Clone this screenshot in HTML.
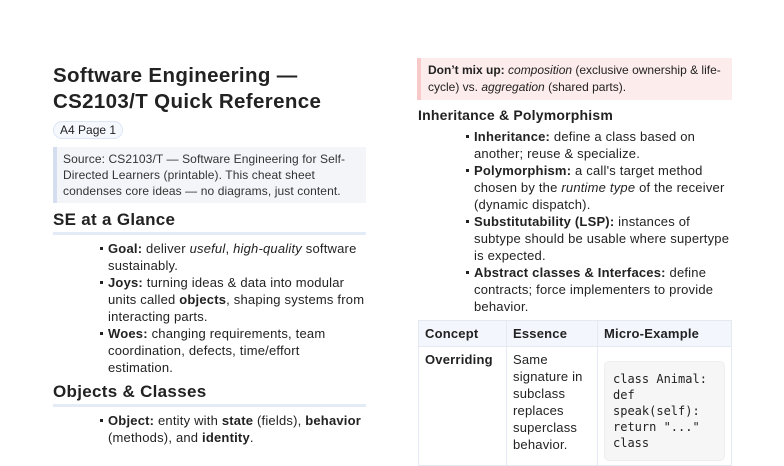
<!DOCTYPE html>
<html><head><meta charset="utf-8"><style>
*{margin:0;padding:0;box-sizing:border-box}
body{width:784px;height:441px;overflow:hidden;background:#fff;font-family:"Liberation Sans",sans-serif;color:#222;position:relative;letter-spacing:0.2px}
.a{position:absolute}
h1{font-size:20.5px;font-weight:bold;line-height:26px;color:#222;letter-spacing:0.35px}
.badge{border:1.5px solid #dde6f5;background:#f5f8fd;border-radius:9px;font-size:12px;padding:1px 6px;line-height:14px;letter-spacing:0}
.src{background:#f3f5f9;border-left:4px solid #d5deef;font-size:12px;line-height:16px;padding:4px 8px 4px 6px;color:#333;letter-spacing:0.1px}
h2{font-size:17px;font-weight:bold;border-bottom:3px solid #e3ebf7;padding-bottom:2px;line-height:21px;letter-spacing:0.3px}
ul{list-style:none;font-size:13px;line-height:17px}
li{position:relative;padding-left:8px}
li:before{content:"";position:absolute;left:0;top:7px;width:3px;height:3px;background:#222}
.pink{background:#fdecec;border-left:4px solid #f7c9c9;font-size:12px;line-height:17px;padding:4px 4px 4px 7px;letter-spacing:0}
h3{font-size:14px;font-weight:bold;letter-spacing:0.2px}
table{border-collapse:collapse;font-size:13px;line-height:17px}
td,th{border:1.5px solid #e4e9f2;vertical-align:top;text-align:left;padding:4px 6px}
th{background:#f3f7fd;font-weight:bold}
pre{font-family:"DejaVu Sans Mono",monospace;font-size:12px;line-height:16px;background:#f6f6f6;border:1px solid #eee;border-radius:5px;padding:9px 8px;margin-top:10px;letter-spacing:0}
</style></head><body>
<h1 class="a" style="left:53px;top:63px">Software Engineering —<br>CS2103/T Quick Reference</h1>
<div class="a badge" style="left:53px;top:121px">A4 Page 1</div>
<div class="a src" style="left:53px;top:147px;width:313px">Source: CS2103/T — Software Engineering for Self-Directed Learners (printable). This cheat sheet condenses core ideas — no diagrams, just content.</div>
<h2 class="a" style="left:53px;top:209px;width:313px">SE at a Glance</h2>
<ul class="a" style="left:100px;top:240px;width:266px">
<li><b>Goal:</b> deliver <i>useful</i>, <i>high-quality</i> software sustainably.</li>
<li><b>Joys:</b> turning ideas &amp; data into modular units called <b>objects</b>, shaping systems from interacting parts.</li>
<li><b>Woes:</b> changing requirements, team coordination, defects, time/effort estimation.</li>
</ul>
<h2 class="a" style="left:53px;top:381px;width:313px">Objects &amp; Classes</h2>
<ul class="a" style="left:100px;top:412px;width:266px">
<li><b>Object:</b> entity with <b>state</b> (fields), <b>behavior</b> (methods), and <b>identity</b>.</li>
</ul>
<div class="a pink" style="left:417px;top:58px;width:315px"><b>Don’t mix up:</b> <i>composition</i> (exclusive ownership &amp; life-cycle) vs. <i>aggregation</i> (shared parts).</div>
<h3 class="a" style="left:418px;top:107px">Inheritance &amp; Polymorphism</h3>
<ul class="a" style="left:466px;top:128px;width:266px">
<li><b>Inheritance:</b> define a class based on another; reuse &amp; specialize.</li>
<li><b>Polymorphism:</b> a call's target method chosen by the <i>runtime type</i> of the receiver (dynamic dispatch).</li>
<li><b>Substitutability (LSP):</b> instances of subtype should be usable where supertype is expected.</li>
<li><b>Abstract classes &amp; Interfaces:</b> define contracts; force implementers to provide behavior.</li>
</ul>
<table class="a" style="left:418px;top:320px;width:314px">
<tr><th style="width:88px">Concept</th><th style="width:91px">Essence</th><th>Micro-Example</th></tr>
<tr><td><b>Overriding</b></td><td>Same signature in subclass replaces superclass behavior.</td><td><pre>class Animal:
def
speak(self):
return "..."
class</pre></td></tr>
</table>
</body></html>
